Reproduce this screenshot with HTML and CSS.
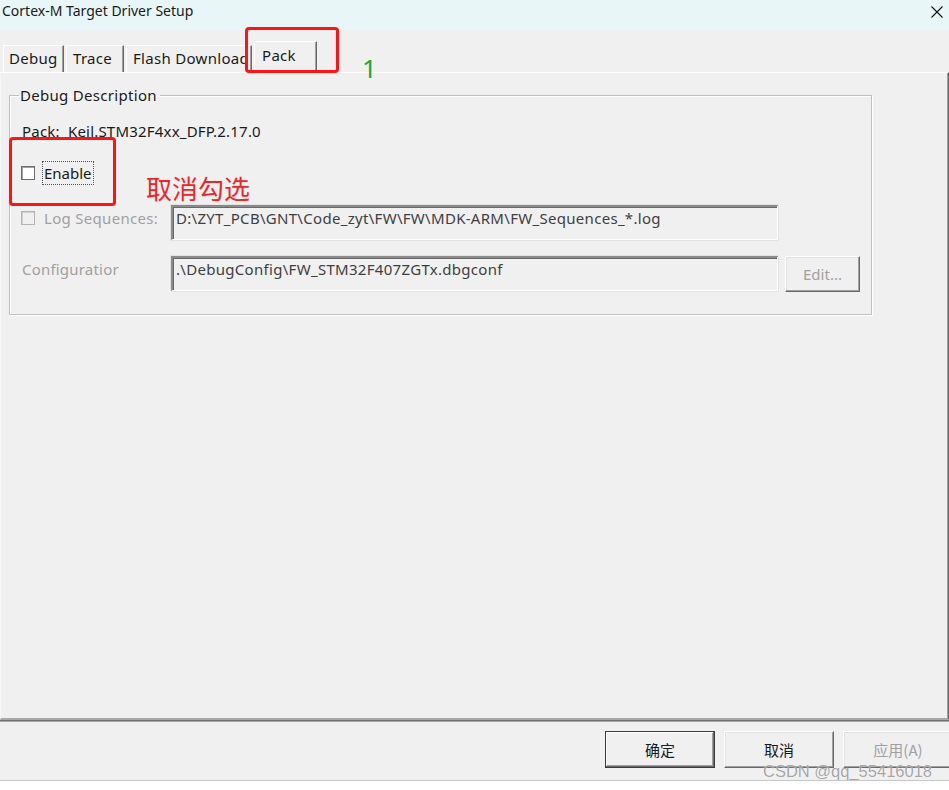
FILE: index.html
```html
<!DOCTYPE html>
<html lang="zh">
<head>
<meta charset="utf-8">
<title>Cortex-M Target Driver Setup</title>
<link rel="stylesheet" href="styles.css">
</head>
<body>
<div class="window">
  <div class="titlebar">
    <span class="title">Cortex-M Target Driver Setup</span>
    <svg class="close" width="12" height="12" viewBox="0 0 12 12"><path d="M0.5 0.5 L11.5 11.5 M11.5 0.5 L0.5 11.5" stroke="#111" stroke-width="1.1" fill="none"/></svg>
  </div>
  <div class="tabstrip">
    <div class="tab tab-debug">Debug</div>
    <div class="tab tab-trace">Trace</div>
    <div class="tab tab-flash">Flash Download</div>
    <div class="tab tab-pack active">Pack</div>
  </div>
  <div class="panel">
    <fieldset class="group">
      <legend>Debug Description</legend>
      <div class="packline">Pack:&nbsp;&nbsp;Keil.STM32F4xx_DFP.2.17.0</div>
      <div class="row enable-row">
        <span class="check"></span>
        <span class="focus">Enable</span>
      </div>
      <div class="row field-row log-row">
        <div class="label-col">
          <span class="check disabled"></span>
          <span class="dim">Log Sequences:</span>
        </div>
        <div class="field">D:\ZYT_PCB\GNT\Code_zyt\FW\FW\MDK-ARM\FW_Sequences_*.log</div>
      </div>
      <div class="row field-row">
        <div class="label-col">
          <span class="dim cfg">Configuratior</span>
        </div>
        <div class="field">.\DebugConfig\FW_STM32F407ZGTx.dbgconf</div>
        <div class="btn small-btn disabled-btn">Edit...</div>
      </div>
    </fieldset>
  </div>
  <div class="footer">
    <div class="btn big-btn default-btn">确定</div>
    <div class="btn big-btn">取消</div>
    <div class="btn big-btn disabled-btn">应用(A)</div>
  </div>

  <div class="mark mark-pack"></div>
  <div class="mark mark-enable"></div>
  <div class="note note-red">取消勾选</div>
  <div class="note note-green">1</div>
  <div class="watermark">CSDN @qq_55416018</div>
</div>
</body>
</html>
```

FILE: styles.css
```css
* { box-sizing: border-box; }

html, body {
  margin: 0;
  padding: 0;
  background: #ffffff;
}

body {
  width: 949px;
  height: 790px;
  overflow: hidden;
  font-family: "Noto Sans", "Noto Sans CJK SC", sans-serif;
  font-size: 15px;
  letter-spacing: 0.3px;
  color: #1a1a1a;
}

.window {
  position: relative;
  width: 949px;
  height: 781px;
  background: #f0f0f0;
  border-bottom: 1px solid #c8c8c8;
  display: flex;
  flex-direction: column;
  overflow: hidden;
}

.titlebar {
  height: 30px;
  flex: none;
  background: #e8f6f8;
  display: flex;
  align-items: center;
  justify-content: space-between;
  padding: 0 6px 8px 2px;
}

.title {
  font-size: 14px;
  letter-spacing: 0;
  line-height: 20px;
  color: #1a1a1a;
}

.close { display: block; margin-top: 2px; }

.tabstrip {
  height: 42px;
  flex: none;
  display: flex;
  align-items: flex-end;
  padding-left: 3px;
  gap: 2px;
}

.tab {
  height: 27px;
  line-height: 25px;
  padding: 0 5px;
  border-top: 1px solid #ffffff;
  border-left: 1px solid #ffffff;
  border-right: 1px solid #696969;
  box-shadow: inset -1px 0 0 #a0a0a0;
  font-size: 15px;
  white-space: nowrap;
  overflow: hidden;
  color: #1a1a1a;
}

.tab-debug { width: 61px; }
.tab-trace { width: 58px; padding-left: 6px; }
.tab-flash { width: 126px; padding-left: 6px; padding-right: 0; }
.tab-pack { width: 63px; }

.tab.active {
  height: 31px;
  line-height: 27px;
  padding-left: 7px;
  background: #f0f0f0;
  position: relative;
  z-index: 1;
}

.panel {
  height: 648px;
  flex: none;
  border-top: 1px solid #ffffff;
  border-left: 1px solid #f8f8f8;
  border-right: 1px solid #696969;
  border-bottom: 2px solid #a8a8a8;
  box-shadow: inset -1px 0 0 #a0a0a0;
  padding: 12px 0 0 8px;
}

.group {
  width: 863px;
  margin: 0;
  padding: 0 11px 22px 11px;
  border: 1px solid #c0c0c0;
  box-shadow: inset 1px 1px 0 #ffffff, 1px 1px 0 #ffffff;
}

.group legend {
  margin-left: -2px;
  padding: 0 3px 0 1px;
  line-height: 20px;
  font-size: 15px;
  color: #1a1a1a;
}

.packline {
  margin-top: 16px;
  line-height: 20px;
  padding-left: 1px;
  letter-spacing: 0.2px;
}

.row {
  display: flex;
  align-items: center;
}

.enable-row {
  margin-top: 20px;
  height: 24px;
}

.check {
  width: 14px;
  height: 14px;
  flex: none;
  background: #ffffff;
  border: 1px solid #6e6e6e;
  box-shadow: inset 1px 1px 0 #a0a0a0;
}

.check.disabled {
  background: #f0f0f0;
  border-color: #b4b4b4;
  box-shadow: inset 1px 1px 0 #d0d0d0;
}

.focus {
  margin-left: 7px;
  height: 24px;
  line-height: 22px;
  padding: 0 1px;
  letter-spacing: 0;
  border: 1px dotted #555;
}

.field-row {
  margin-top: 20px;
  align-items: flex-start;
}

.field-row + .field-row { margin-top: 16px; }

.label-col {
  width: 150px;
  flex: none;
  display: flex;
  align-items: center;
  height: 26px;
}

.dim {
  color: #a0a0a0;
  margin-left: 9px;
}

.dim.cfg { margin-left: 1px; letter-spacing: 0.2px; }

.field {
  width: 607px;
  height: 35px;
  flex: none;
  padding: 1px 0 0 3px;
  line-height: 20px;
  color: #3f3f3f;
  border-top: 2px solid #8a8a8a;
  border-left: 2px solid #8a8a8a;
  border-right: 1px solid #ffffff;
  border-bottom: 1px solid #ffffff;
  box-shadow: inset 1px 1px 0 #6a6a6a, 0 0 0 1px #e3e3e3;
  white-space: nowrap;
  overflow: hidden;
}

.btn {
  display: flex;
  align-items: center;
  justify-content: center;
  flex: none;
  border-top: 1px solid #ffffff;
  border-left: 1px solid #ffffff;
  border-right: 1px solid #696969;
  border-bottom: 1px solid #696969;
  box-shadow: inset -1px -1px 0 #a0a0a0, inset 1px 1px 0 #e3e3e3;
  color: #1a1a1a;
  letter-spacing: 0;
}

.small-btn {
  width: 75px;
  height: 36px;
  margin-left: 7px;
}

.disabled-btn { color: #a0a0a0; }

.footer {
  flex: none;
  height: 59px;
  border-top: 1px solid #707070;
  box-shadow: inset 0 1px 0 #a8a8a8;
  display: flex;
  align-items: flex-start;
  padding: 10px 0 0 605px;
  gap: 9px;
}

.big-btn {
  width: 110px;
  height: 37px;
  font-family: "Noto Sans CJK SC", sans-serif;
  font-size: 15px;
}

.default-btn {
  border: 1px solid #3c3c3c;
  box-shadow: inset -1px -1px 0 #696969, inset 1px 1px 0 #ffffff, inset -2px -2px 0 #a0a0a0;
}

/* annotations overlaid on the screenshot */
.mark {
  position: absolute;
  border: 3px solid #ff1414;
  border-radius: 4px;
}

.mark-pack { left: 245px; top: 27px; width: 94px; height: 46px; z-index: 3; }
.mark-enable { left: 9px; top: 137px; width: 107px; height: 69px; }

.note {
  position: absolute;
  line-height: 1;
  letter-spacing: 0;
}

.note-red {
  left: 146px;
  top: 175px;
  font-family: "Noto Sans CJK SC", sans-serif;
  font-size: 26px;
  color: #f02424;
}

.note-green {
  left: 362px;
  top: 55px;
  font-family: "Noto Sans", sans-serif;
  font-size: 26px;
  color: #2aa52a;
}

.watermark {
  position: absolute;
  left: 763px;
  top: 761px;
  font-family: "Liberation Sans", sans-serif;
  font-size: 16.5px;
  line-height: 20px;
  color: rgba(90, 90, 90, 0.55);
  text-shadow: 0 0 1px #ffffff;
  letter-spacing: 0;
  z-index: 4;
}
```
